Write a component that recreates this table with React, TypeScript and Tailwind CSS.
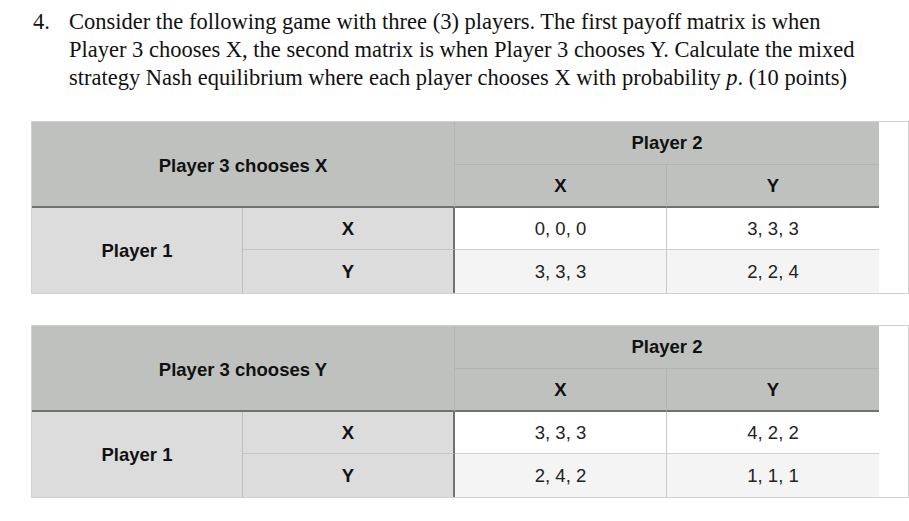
import React from "react";

const sans = { fontFamily: '"Liberation Sans", Arial, sans-serif' };

function Matrix({ p3, rows }: { p3: string; rows: [string, string][] }) {
  const hdr = "bg-[#bfc1bf] flex items-center justify-center font-bold text-[#111]";
  return (
    <div
      className="grid grid-cols-[211px_212px_212px_212px] grid-rows-[43px_43px_42px_43px] text-[18.5px] border border-[#cfd0cf]"
      style={sans}
    >
      <div className={`${hdr} col-span-2 row-span-2 pt-[3px] border-b-2 border-b-[#707170] border-r border-r-[#b4b5b4]`}>{p3}</div>
      <div className={`${hdr} col-span-2 border-b border-b-[#b2b3b2]`}>Player 2</div>
      <div className={`${hdr} border-b-2 border-b-[#707170] border-r border-r-[#b2b3b2]`}>X</div>
      <div className={`${hdr} border-b-2 border-b-[#707170]`}>Y</div>
      <div className="row-span-2 bg-[#dcdcdc] flex items-center justify-center font-bold text-[#111] border-r border-r-[#bcbcbc]">Player 1</div>
      <div className="bg-[#dcdcdc] flex items-center justify-center font-bold text-[#111] border-b border-b-[#c4c4c4] border-r-2 border-r-[#707170]">X</div>
      <div className="bg-white flex items-center justify-center text-[#222] border-b border-b-[#d0d0d0] border-r border-r-[#c8c8c8]">{rows[0][0]}</div>
      <div className="bg-white flex items-center justify-center text-[#222] border-b border-b-[#d0d0d0]">{rows[0][1]}</div>
      <div className="bg-[#dcdcdc] flex items-center justify-center font-bold text-[#111] border-r-2 border-r-[#707170]">Y</div>
      <div className="bg-[#f4f4f4] flex items-center justify-center text-[#222] border-r border-r-[#c8c8c8]">{rows[1][0]}</div>
      <div className="bg-[#f4f4f4] flex items-center justify-center text-[#222]">{rows[1][1]}</div>
    </div>
  );
}

export default function App() {
  return (
    <div className="w-[909px] h-[521px] bg-white overflow-hidden">
      <div
        className="flex pl-[33px] pt-[8px] text-[22.5px] leading-[28px] text-[#111]"
        style={{ fontFamily: '"Liberation Serif", "Times New Roman", serif' }}
      >
        <div className="w-[36px] shrink-0">4.</div>
        <div className="w-[800px]">
          Consider the following game with three (3) players. The first payoff matrix is when Player 3 chooses X, the second matrix is when Player 3 chooses Y. Calculate the mixed strategy Nash equilibrium where each player chooses X with probability <i>p</i>. (10 points)
        </div>
      </div>
      <div className="pl-[31px] pt-[29px] flex flex-col gap-[31px]">
        <Matrix p3="Player 3 chooses X" rows={[["0, 0, 0", "3, 3, 3"], ["3, 3, 3", "2, 2, 4"]]} />
        <Matrix p3="Player 3 chooses Y" rows={[["3, 3, 3", "4, 2, 2"], ["2, 4, 2", "1, 1, 1"]]} />
      </div>
    </div>
  );
}
